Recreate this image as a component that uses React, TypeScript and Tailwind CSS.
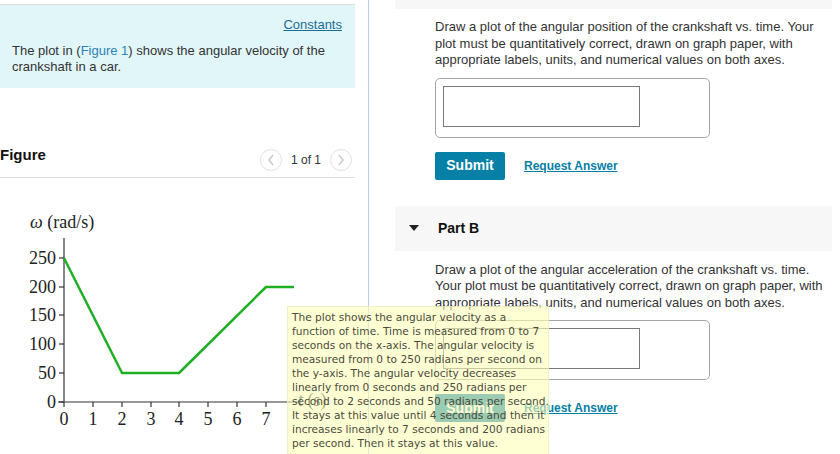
import React from 'react';

const xs = [64, 93, 122, 151, 179, 208, 237, 266];
const ys = [
  { v: '250', y: 258 },
  { v: '200', y: 287 },
  { v: '150', y: 315 },
  { v: '100', y: 344 },
  { v: '50', y: 373 },
  { v: '0', y: 402 },
];

const tooltipLines = [
  'The plot shows the angular velocity as a',
  'function of time. Time is measured from 0 to 7',
  'seconds on the x-axis. The angular velocity is',
  'measured from 0 to 250 radians per second on',
  'the y-axis. The angular velocity decreases',
  'linearly from 0 seconds and 250 radians per',
  'second to 2 seconds and 50 radians per second.',
  'It stays at this value until 4 seconds and then it',
  'increases linearly to 7 seconds and 200 radians',
  'per second. Then it stays at this value.',
];

const Chart: React.FC = () => (
  <svg width="355" height="276" viewBox="0 178 355 276" className="block overflow-visible">
    <text x="30" y="228" fontFamily="'Liberation Serif', serif" fontSize="18" fill="#222">
      <tspan fontStyle="italic">ω</tspan> (rad/s)
    </text>
    {/* axes */}
    <line x1="64" y1="238" x2="64" y2="402" stroke="#333" strokeWidth="1.2" />
    <line x1="58" y1="402" x2="300" y2="402" stroke="#333" strokeWidth="1.2" />
    {ys.map(t => (
      <g key={t.v}>
        <line x1="59" y1={t.y} x2="64" y2={t.y} stroke="#333" strokeWidth="1.2" />
        <text x="56" y={t.y + 6} textAnchor="end" fontFamily="'Liberation Serif', serif" fontSize="18" fill="#222">
          {t.v}
        </text>
      </g>
    ))}
    {xs.map((x, i) => (
      <g key={i}>
        <line x1={x} y1="402" x2={x} y2="407" stroke="#333" strokeWidth="1.2" />
        <text x={x} y="425" textAnchor="middle" fontFamily="'Liberation Serif', serif" fontSize="18" fill="#222">
          {i}
        </text>
      </g>
    ))}
    <text x="298" y="406" fontFamily="'Liberation Serif', serif" fontSize="18" fill="#222">
      <tspan fontStyle="italic">t</tspan> (s)
    </text>
    <polyline
      points="64,258 122,373 179,373 266,287 294,287"
      fill="none"
      stroke="#1faf24"
      strokeWidth="2.5"
      strokeLinejoin="round"
    />
  </svg>
);

const Chevron: React.FC<{ dir: 'left' | 'right' }> = ({ dir }) => (
  <div className="w-[22px] h-[22px] rounded-full border border-[#e2e2e2] flex items-center justify-center">
    <svg width="8" height="12" viewBox="0 0 8 12">
      <path
        d={dir === 'left' ? 'M6 1 L2 6 L6 11' : 'M2 1 L6 6 L2 11'}
        fill="none"
        stroke="#c4c4c4"
        strokeWidth="1.3"
      />
    </svg>
  </div>
);

const AnswerPart: React.FC<{ text: string }> = ({ text }) => (
  <div className="pl-[40px]">
    <p className="text-[13px] leading-[16.5px] text-[#333] w-[395px]">{text}</p>
    <div className="mt-[9px] w-[275px] h-[60px] border border-[#a5a5a5] rounded-[5px] p-[7px]">
      <div className="w-[197px] h-[41px] border border-[#7a7a7a]" />
    </div>
    <div className="mt-[14px] flex items-center gap-[19px]">
      <button className="w-[70px] h-[28px] bg-[#0680a6] rounded-[2px] text-white font-bold text-[14px]">
        Submit
      </button>
      <a href="#" className="text-[12px] font-bold text-[#0680a6] underline">
        Request Answer
      </a>
    </div>
  </div>
);

const App: React.FC = () => {
  return (
    <div className="relative w-[840px] h-[454px] overflow-hidden bg-white flex font-['Liberation_Sans',Arial,sans-serif]">
      {/* Left column */}
      <div className="w-[355px] shrink-0">
        <div className="mt-[4px] border-t border-[#dedede]" />
        <div className="bg-[#e1f6f9] h-[83px] pt-[12px]">
          <div className="text-right pr-[13px] text-[13px] leading-[16.5px]">
            <a href="#" className="text-[#1b6c96] underline">Constants</a>
          </div>
          <p className="mt-[9px] pl-[12px] text-[13px] leading-[16.5px] text-[#333]">
            The plot in (<a href="#" className="text-[#2b82b8]">Figure 1</a>) shows the angular velocity of the
            <br />
            crankshaft in a car.
          </p>
        </div>
        <div className="mt-[57px] h-[33px] border-b border-[#dedede] flex items-center justify-between">
          <h2 className="font-bold text-[15px] text-[#111] pb-[11px]">Figure</h2>
          <div className="flex items-center gap-[9px] pr-[3px] pb-[3px]">
            <Chevron dir="left" />
            <span className="text-[12px] text-[#333]">1 of 1</span>
            <Chevron dir="right" />
          </div>
        </div>
        <Chart />
      </div>

      {/* Divider */}
      <div className="w-[13px] shrink-0" />
      <div className="w-px shrink-0 bg-[#b7cfe9]" />

      {/* Right column */}
      <div className="pl-[26px]">
        <div className="w-[437px] h-[9px] bg-[#f7f7f7]" />
        <div className="mt-[10px]">
          <AnswerPart text="Draw a plot of the angular position of the crankshaft vs. time. Your plot must be quantitatively correct, drawn on graph paper, with appropriate labels, units, and numerical values on both axes." />
        </div>
        <div className="mt-[26px] w-[437px] h-[45px] bg-[#f7f7f7] flex items-center">
          <svg width="10" height="6" viewBox="0 0 10 6" className="ml-[14px]">
            <path d="M0 0 L10 0 L5 6 Z" fill="#222" />
          </svg>
          <span className="ml-[19px] font-bold text-[14px] text-[#111]">Part B</span>
        </div>
        <div className="mt-[11px]">
          <AnswerPart text="Draw a plot of the angular acceleration of the crankshaft vs. time. Your plot must be quantitatively correct, drawn on graph paper, with appropriate labels, units, and numerical values on both axes." />
        </div>
      </div>

      {/* Tooltip */}
      <div className="absolute left-[287px] top-[306px] w-[262px] h-[160px] bg-[#ffffb8]/60 border border-[#e8e8c0]/60 px-[4px] pt-[3px] font-['DejaVu_Sans',Verdana,sans-serif] text-[10.6px] leading-[14px] text-[#4a4a3c]">
        {tooltipLines.map((l, i) => (
          <div key={i} className="whitespace-nowrap">{l}</div>
        ))}
      </div>
    </div>
  );
};

export default App;
